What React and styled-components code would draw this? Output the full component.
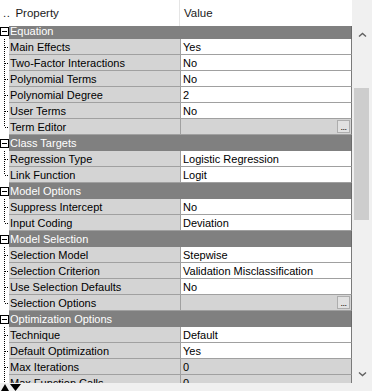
import styled, { createGlobalStyle } from "styled-components";

const GlobalStyle = createGlobalStyle`
  body {
    margin: 0;
    background: #ffffff;
    font-family: "Liberation Sans", Arial, sans-serif;
  }
`;

const Frame = styled.div`
  width: 372px;
  height: 391px;
  display: flex;
  flex-direction: column;
  overflow: hidden;
  background: #ffffff;
  font-size: 11px;
  color: #000;
`;

const Body = styled.div`
  display: flex;
  height: 383px;
`;

const Main = styled.div`
  width: 352px;
  display: flex;
  flex-direction: column;
`;

const Header = styled.div`
  height: 26px;
  display: grid;
  grid-template-columns: 180px 172px;
  background: #fff;
`;

const HeadCell = styled.div`
  display: flex;
  align-items: center;
  padding-left: ${(props) => props.$pad || "3px"};
  font-size: 11.5px;
  color: #1a1a1a;
  border-right: ${(props) => (props.$sep ? "1px solid #e5e5e5" : "none")};
`;

const Dots = styled.span`
  margin-right: 5px;
  letter-spacing: 0.5px;
`;

const Viewport = styled.div`
  height: 357px;
  overflow: hidden;
`;

const List = styled.div`
  margin-top: -3px;
`;

const Row = styled.div`
  display: grid;
  grid-template-columns: 9px 172px 171px;
  height: 16px;
`;

const GroupRow = styled.div`
  display: grid;
  grid-template-columns: 9px 343px;
  height: 16px;
`;

const Gutter = styled.div`
  width: 9px;
  height: 16px;
  background: #fff;
  display: flex;
`;

const NameCell = styled.div`
  display: flex;
  align-items: center;
  padding-left: 1px;
  background: #d4d4d4;
  border-right: 1px solid #a0a0a0;
  border-bottom: 1px solid #a0a0a0;
  white-space: nowrap;
  overflow: hidden;
`;

const ValueCell = styled.div`
  display: flex;
  align-items: center;
  padding-left: 2px;
  background: ${(props) => (props.$readOnly ? "#d4d4d4" : "#ffffff")};
  border-right: 1px solid #7a7a7a;
  border-bottom: 1px solid #a0a0a0;
  white-space: nowrap;
  overflow: hidden;
`;

const GroupCell = styled.div`
  display: flex;
  align-items: center;
  padding-left: 1px;
  background: #808080;
  color: #ffffff;
  border-right: 1px solid #6a6a6a;
`;

const EllipsisButton = styled.div`
  margin-left: auto;
  margin-right: 1px;
  width: 11px;
  height: 11px;
  border: 1px solid #adadad;
  background: #e1e1e1;
  font-size: 9px;
  line-height: 13px;
  text-align: center;
  letter-spacing: -0.5px;
  color: #000;
`;

const Scrollbar = styled.div`
  width: 20px;
  display: flex;
  flex-direction: column;
  background: #f0f0f0;
`;

const ScrollSpacer = styled.div`
  height: ${(props) => props.$h}px;
`;

const ArrowButton = styled.div`
  height: 18px;
  display: flex;
  align-items: center;
  justify-content: center;
`;

const Thumb = styled.div`
  width: 15px;
  margin-left: 2px;
  height: 132px;
  background: #cdcdcd;
`;

const Footer = styled.div`
  height: 8px;
  display: flex;
  align-items: center;
  gap: 1px;
  padding-left: 1px;
  background: #f0f0f0;
`;

const Tree = ({ last }) => (
  <Gutter>
    <svg width="9" height="16" viewBox="0 0 9 16">
      <line
        x1="4.5"
        y1="0"
        x2="4.5"
        y2={last ? 8 : 16}
        stroke="#000"
        strokeWidth="1"
        strokeDasharray="1 1"
      />
      <line
        x1="5"
        y1="8.5"
        x2="9"
        y2="8.5"
        stroke="#000"
        strokeWidth="1"
        strokeDasharray="1 1"
      />
    </svg>
  </Gutter>
);

const Collapse = () => (
  <Gutter>
    <svg width="9" height="16" viewBox="0 0 9 16">
      <rect x="0.5" y="4.5" width="8" height="8" fill="#fff" stroke="#000" />
      <line x1="2" y1="8.5" x2="7" y2="8.5" stroke="#000" />
    </svg>
  </Gutter>
);

const Chevron = ({ down }) => (
  <svg width="9" height="6" viewBox="0 0 9 6">
    <polyline
      points={down ? "1,1.5 4.5,4.5 8,1.5" : "1,4.5 4.5,1.5 8,4.5"}
      fill="none"
      stroke="#606060"
      strokeWidth="1.4"
    />
  </svg>
);

const groups = [
  {
    title: "Equation",
    rows: [
      ["Main Effects", "Yes"],
      ["Two-Factor Interactions", "No"],
      ["Polynomial Terms", "No"],
      ["Polynomial Degree", "2"],
      ["User Terms", "No"],
      ["Term Editor", "", "button"],
    ],
  },
  {
    title: "Class Targets",
    rows: [
      ["Regression Type", "Logistic Regression"],
      ["Link Function", "Logit"],
    ],
  },
  {
    title: "Model Options",
    rows: [
      ["Suppress Intercept", "No"],
      ["Input Coding", "Deviation"],
    ],
  },
  {
    title: "Model Selection",
    rows: [
      ["Selection Model", "Stepwise"],
      ["Selection Criterion", "Validation Misclassification"],
      ["Use Selection Defaults", "No"],
      ["Selection Options", "", "button"],
    ],
  },
  {
    title: "Optimization Options",
    more: true,
    rows: [
      ["Technique", "Default"],
      ["Default Optimization", "Yes"],
      ["Max Iterations", "0", "readonly"],
      ["Max Function Calls", "0", "readonly"],
    ],
  },
];

const App = () => {
  return (
    <Frame>
      <GlobalStyle />
      <Body>
        <Main>
          <Header>
            <HeadCell $sep>
              <Dots>..</Dots>Property
            </HeadCell>
            <HeadCell $pad="4px">Value</HeadCell>
          </Header>
          <Viewport>
            <List>
              {groups.map((g) => (
                <div key={g.title}>
                  <GroupRow>
                    <Collapse />
                    <GroupCell>{g.title}</GroupCell>
                  </GroupRow>
                  {g.rows.map(([name, value, kind], i) => (
                    <Row key={name}>
                      <Tree last={!g.more && i === g.rows.length - 1} />
                      <NameCell>{name}</NameCell>
                      <ValueCell $readOnly={kind === "button" || kind === "readonly"}>
                        {value}
                        {kind === "button" && <EllipsisButton>...</EllipsisButton>}
                      </ValueCell>
                    </Row>
                  ))}
                </div>
              ))}
            </List>
          </Viewport>
        </Main>
        <Scrollbar>
          <ScrollSpacer $h={26} />
          <ArrowButton>
            <Chevron />
          </ArrowButton>
          <ScrollSpacer $h={44} />
          <Thumb />
          <ScrollSpacer $h={145} />
          <ArrowButton>
            <Chevron down />
          </ArrowButton>
        </Scrollbar>
      </Body>
      <Footer>
        <svg width="8" height="7" viewBox="0 0 8 7">
          <polygon points="0,7 4,0 8,7" fill="#000" />
        </svg>
        <svg width="11" height="7" viewBox="0 0 11 7">
          <polygon points="0,0 11,0 5.5,7" fill="#000" />
        </svg>
      </Footer>
    </Frame>
  );
};

export default App;
